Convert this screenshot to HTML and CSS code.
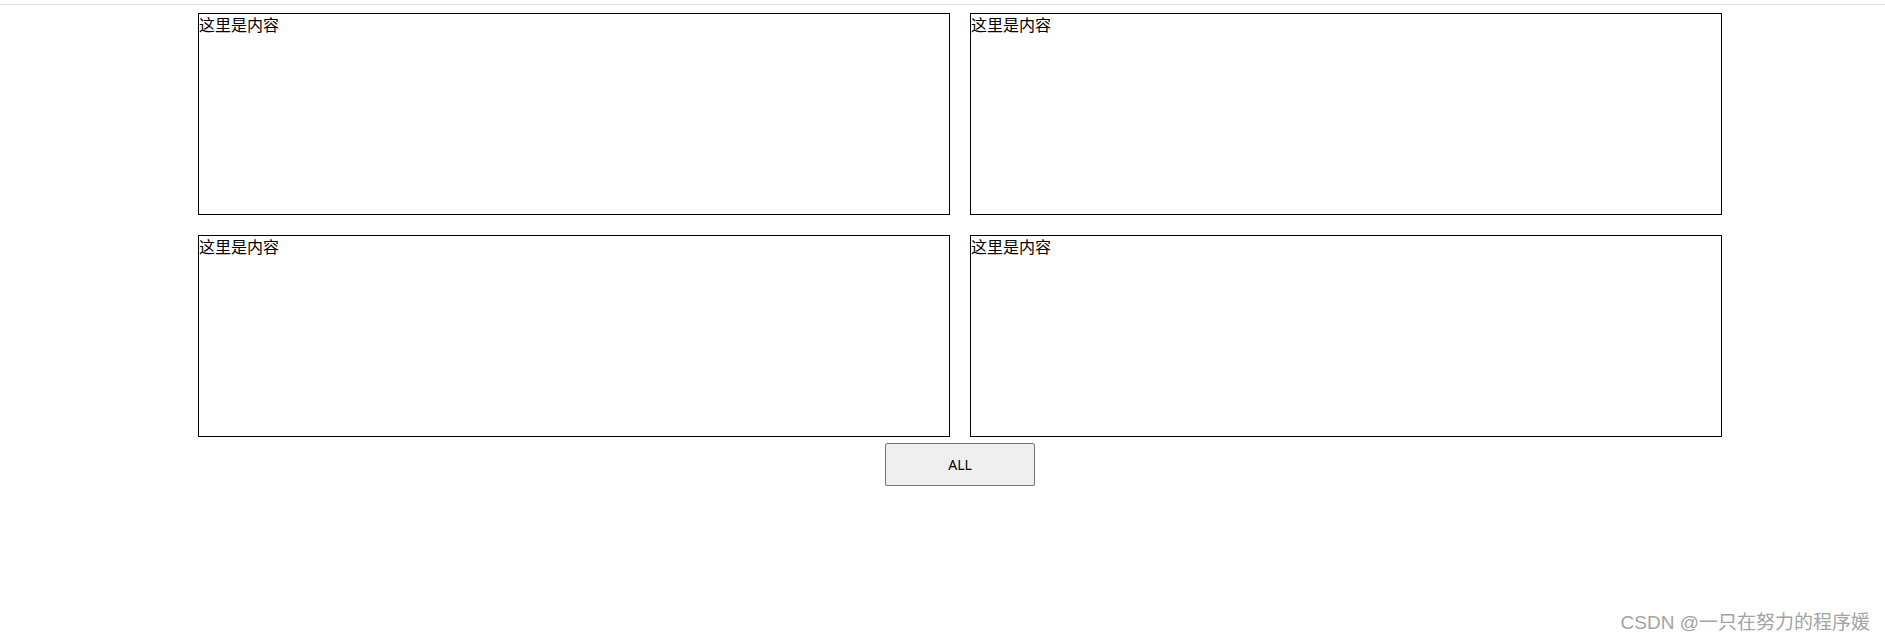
FILE: index.html
```html
<!DOCTYPE html>
<html lang="zh">
<head>
<meta charset="utf-8">
<title>内容</title>
<link rel="stylesheet" href="styles.css">
</head>
<body>
<div class="topbar"></div>
<div class="container">
  <div class="grid">
    <div class="box">这里是内容</div>
    <div class="box">这里是内容</div>
    <div class="box">这里是内容</div>
    <div class="box">这里是内容</div>
  </div>
  <div class="actions">
    <button class="btn" type="button">ALL</button>
  </div>
</div>
<div class="watermark">CSDN @一只在努力的程序媛</div>
</body>
</html>
```
FILE: styles.css
```css
html, body {
  margin: 0;
  padding: 0;
  background: #fff;
}
body {
  font-family: "Noto Sans CJK SC", "Noto Sans", sans-serif;
  color: #000;
  width: 1885px;
  height: 640px;
  position: relative;
  overflow: hidden;
}
.topbar {
  height: 4px;
  border-bottom: 1px solid #e3e3e3;
}
.container {
  margin: 8px 0 0 198px;
  width: 1524px;
}
.grid {
  display: grid;
  grid-template-columns: 752px 752px;
  grid-template-rows: 202px 202px;
  column-gap: 20px;
  row-gap: 20px;
}
.box {
  box-sizing: border-box;
  border: 1px solid #000;
  font-size: 16px;
  line-height: 20px;
  padding: 0;
}
.actions {
  display: flex;
  justify-content: center;
  margin-top: 6px;
}
.btn {
  box-sizing: border-box;
  width: 150px;
  height: 43px;
  background: #efefef;
  border: 1px solid #767676;
  border-radius: 2px;
  font-family: "Noto Sans", "Liberation Sans", sans-serif;
  font-size: 14px;
  color: #000;
  padding: 0;
}
.watermark {
  position: absolute;
  right: 15px;
  bottom: 6px;
  font-family: "Liberation Sans", "Noto Sans CJK SC", sans-serif;
  font-size: 19px;
  color: #a3a3a3;
  white-space: nowrap;
}
```
